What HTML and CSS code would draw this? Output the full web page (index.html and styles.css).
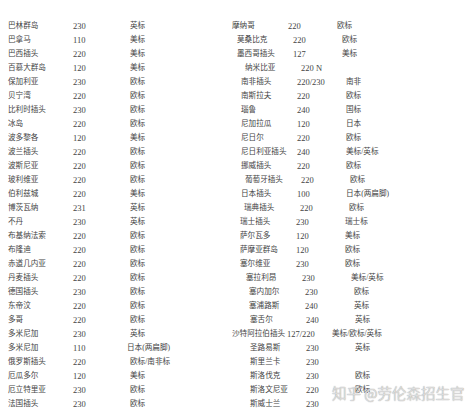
FILE: index.html
```html
<!DOCTYPE html>
<html lang="zh-CN">
<head>
<meta charset="utf-8">
<title>各国插头电压</title>
<link rel="stylesheet" href="styles.css">
</head>
<body>
<div class="sheet">
  <div class="col left">
    <div class="row"><span>巴林群岛</span><span>230</span><span>英标</span></div>
    <div class="row"><span>巴拿马</span><span>110</span><span>美标</span></div>
    <div class="row"><span>巴西插头</span><span>220</span><span>美标</span></div>
    <div class="row"><span>百慕大群岛</span><span>120</span><span>美标</span></div>
    <div class="row"><span>保加利亚</span><span>230</span><span>欧标</span></div>
    <div class="row"><span>贝宁湾</span><span>220</span><span>欧标</span></div>
    <div class="row"><span>比利时插头</span><span>230</span><span>欧标</span></div>
    <div class="row"><span>冰岛</span><span>220</span><span>欧标</span></div>
    <div class="row"><span>波多黎各</span><span>120</span><span>美标</span></div>
    <div class="row"><span>波兰插头</span><span>220</span><span>欧标</span></div>
    <div class="row"><span>波斯尼亚</span><span>220</span><span>欧标</span></div>
    <div class="row"><span>玻利维亚</span><span>220</span><span>欧标</span></div>
    <div class="row"><span>伯利兹城</span><span>220</span><span>美标</span></div>
    <div class="row"><span>博茨瓦纳</span><span>231</span><span>英标</span></div>
    <div class="row"><span>不丹</span><span>230</span><span>英标</span></div>
    <div class="row"><span>布基纳法索</span><span>220</span><span>欧标</span></div>
    <div class="row"><span>布隆迪</span><span>220</span><span>欧标</span></div>
    <div class="row"><span>赤道几内亚</span><span>220</span><span>欧标</span></div>
    <div class="row"><span>丹麦插头</span><span>220</span><span>欧标</span></div>
    <div class="row"><span>德国插头</span><span>230</span><span>欧标</span></div>
    <div class="row"><span>东帝汶</span><span>220</span><span>欧标</span></div>
    <div class="row"><span>多哥</span><span>220</span><span>欧标</span></div>
    <div class="row"><span>多米尼加</span><span>230</span><span>英标</span></div>
    <div class="row"><span>多米尼加</span><span>110</span><span class="pull">日本(两扁脚)</span></div>
    <div class="row"><span>俄罗斯插头</span><span>220</span><span>欧标/南非标</span></div>
    <div class="row"><span>厄瓜多尔</span><span>120</span><span>美标</span></div>
    <div class="row"><span>厄立特里亚</span><span>230</span><span>欧标</span></div>
    <div class="row"><span>法国插头</span><span>230</span><span>欧标</span></div>
  </div>
  <div class="col right">
    <div class="row i0"><span>摩纳哥</span><span>220</span><span>欧标</span></div>
    <div class="row i5"><span>莫桑比克</span><span>220</span><span>欧标</span></div>
    <div class="row i5"><span>墨西哥插头</span><span>127</span><span>美标</span></div>
    <div class="row i13"><span>纳米比亚</span><span>220 N</span><span></span></div>
    <div class="row i9"><span>南非插头</span><span>220/230</span><span>南非</span></div>
    <div class="row i9"><span>南斯拉夫</span><span>220</span><span>欧标</span></div>
    <div class="row i9"><span>瑙鲁</span><span>240</span><span>国标</span></div>
    <div class="row i9"><span>尼加拉瓜</span><span>120</span><span>日本</span></div>
    <div class="row i9"><span>尼日尔</span><span>220</span><span>欧标</span></div>
    <div class="row i9"><span>尼日利亚插头</span><span>240</span><span>美标/英标</span></div>
    <div class="row i9"><span>挪威插头</span><span>220</span><span>欧标</span></div>
    <div class="row i13"><span>葡萄牙插头</span><span>220</span><span>欧标</span></div>
    <div class="row i9"><span>日本插头</span><span>100</span><span>日本(两扁脚)</span></div>
    <div class="row i12"><span>瑞典插头</span><span>220</span><span>欧标</span></div>
    <div class="row i8"><span>瑞士插头</span><span>230</span><span>瑞士标</span></div>
    <div class="row i8"><span>萨尔瓦多</span><span>120</span><span>美标</span></div>
    <div class="row i8"><span>萨摩亚群岛</span><span>120</span><span>欧标</span></div>
    <div class="row i8"><span>塞尔维亚</span><span>230</span><span>欧标</span></div>
    <div class="row i14"><span>塞拉利昂</span><span>230</span><span>美标/英标</span></div>
    <div class="row i17"><span>塞内加尔</span><span>230</span><span>欧标</span></div>
    <div class="row i17"><span>塞浦路斯</span><span>240</span><span>英标</span></div>
    <div class="row i18"><span>塞舌尔</span><span>240</span><span>英标</span></div>
    <div class="row i0 wide"><span>沙特阿拉伯插头</span><span>127/220</span><span>美标/欧标/英标</span></div>
    <div class="row i18"><span>圣路易斯</span><span>230</span><span>英标</span></div>
    <div class="row i18"><span>斯里兰卡</span><span>230</span><span></span></div>
    <div class="row i18"><span>斯洛伐克</span><span>230</span><span>欧标</span></div>
    <div class="row i18"><span>斯洛文尼亚</span><span>220</span><span>欧标</span></div>
    <div class="row i18"><span>斯威士兰</span><span>230</span><span></span></div>
  </div>
  <div class="watermark">知乎 @劳伦森招生官</div>
</div>
</body>
</html>
```
FILE: styles.css
```css
html, body {
  margin: 0;
  padding: 0;
  background: #ffffff;
}

.sheet {
  position: relative;
  display: flex;
  width: 474px;
  height: 415px;
  padding: 19px 0 0 8px;
  box-sizing: border-box;
  overflow: hidden;
  font-family: "Liberation Serif", "Noto Sans CJK SC", serif;
  font-size: 7.6px;
  color: #444444;
  background: #ffffff;
  opacity: 0.995;
}

.col {
  display: flex;
  flex-direction: column;
}

.left {
  width: 224px;
}

.right {
  flex: 1;
}

.row {
  display: grid;
  height: 14px;
  line-height: 14px;
  white-space: nowrap;
}

.row > span:nth-child(2) {
  font-size: 8.5px;
}

.left .row {
  grid-template-columns: 65px 57px auto;
}

.left .row .pull {
  margin-left: -3px;
}

.right .row {
  grid-template-columns: 56px 49px auto;
}

.right .row.wide {
  grid-template-columns: 55px 45px auto;
}

.i0 { padding-left: 0; }
.i5 { padding-left: 5px; }
.i8 { padding-left: 8px; }
.i9 { padding-left: 9px; }
.i12 { padding-left: 12px; }
.i13 { padding-left: 13px; }
.i14 { padding-left: 14px; }
.i17 { padding-left: 17px; }
.i18 { padding-left: 18px; }

.watermark {
  position: absolute;
  left: 332px;
  top: 384px;
  font-family: "Noto Sans CJK SC", sans-serif;
  font-size: 14.5px;
  font-weight: 300;
  line-height: 18px;
  color: rgba(255, 255, 255, 0.7);
  text-shadow: 0 0 1px #9a9a9a, 0 0 1px #9a9a9a;
  white-space: nowrap;
}
```
